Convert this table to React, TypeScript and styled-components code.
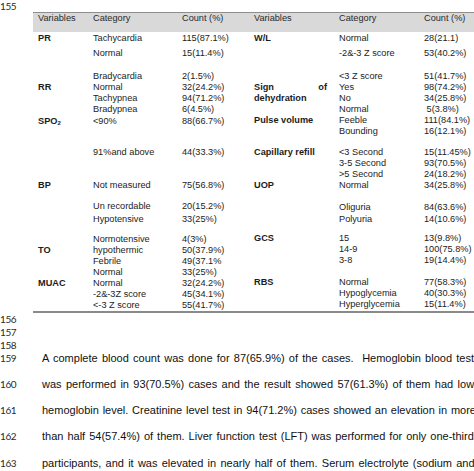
import React from 'react';
import styled, { createGlobalStyle } from 'styled-components';

const GlobalStyle = createGlobalStyle`
  html, body {
    margin: 0;
    padding: 0;
    background: #ffffff;
    overflow: hidden;
  }
`;

const Page = styled.div`
  width: 474px;
  height: 471px;
  overflow: hidden;
  background: #ffffff;
  font-family: 'Liberation Sans', Arial, sans-serif;
  color: #1c1c1c;
`;

const ShortLine = styled.div`
  height: 13px;
  display: flex;
  align-items: center;

  &:first-child {
    height: 12px;
  }
`;

const LineNo = styled.span`
  display: block;
  width: 42px;
  flex-shrink: 0;
  font-family: Lato, 'Open Sans', sans-serif;
  font-size: 10px;
  letter-spacing: -0.4px;
  line-height: 13px;
  color: #2a2a2a;
`;

const Table = styled.div`
  margin-left: 33px;
  width: 480px;
  border-top: 1px solid #8e8e8e;
  font-size: 9.2px;
  line-height: 11px;
`;

const Header = styled.div`
  display: flex;
  height: 19px;
  padding-left: 5px;
  background: #d9d9d9;
  color: #2a2a2a;

  & > div:first-child {
    width: 216px;
  }
`;

const Body = styled.div`
  display: flex;
  padding-left: 5px;
  border-bottom: 2px solid #8a8a8a;
`;

const Half = styled.div`
  display: flex;
  flex-direction: column;

  &:first-child {
    width: 216px;
  }
`;

const Row = styled.div<{ $gap: number; $cols: string }>`
  display: grid;
  grid-template-columns: ${(p) => p.$cols};
  margin-top: ${(p) => p.$gap}px;
  height: 11px;
  white-space: pre;
`;

const Cell = styled.span`
  display: block;
`;

const VarCell = styled.span`
  display: block;
  font-weight: 700;

  sub {
    font-size: 6px;
    line-height: 0;
    vertical-align: -1px;
  }
`;

const Spread = styled.span`
  display: flex;
  justify-content: space-between;
  width: 73px;
`;

const TextLine = styled.div`
  display: flex;
  align-items: flex-start;
  height: 26.3px;
`;

const Text = styled.span<{ $spacing: number }>`
  font-size: 11px;
  line-height: 13px;
  white-space: pre;
  word-spacing: ${(p) => p.$spacing}px;
  color: #111111;
`;

interface TableRow {
  gap?: number;
  variable?: React.ReactNode;
  category: string;
  count: string;
}

const leftRows: TableRow[] = [
  { gap: 1, variable: 'PR', category: 'Tachycardia', count: '115(87.1%)' },
  { gap: 4, category: 'Normal', count: '15(11.4%)' },
  { gap: 12, category: 'Bradycardia', count: '2(1.5%)' },
  { variable: 'RR', category: 'Normal', count: '32(24.2%)' },
  { category: 'Tachypnea', count: '94(71.2%)' },
  { category: 'Bradypnea', count: '6(4.5%)' },
  { gap: 1, variable: <>SPO<sub>2</sub></>, category: '<90%', count: '88(66.7%)' },
  { gap: 20, category: '91%and above', count: '44(33.3%)' },
  { gap: 22, variable: 'BP', category: 'Not measured', count: '75(56.8%)' },
  { gap: 10, category: 'Un recordable', count: '20(15.2%)' },
  { gap: 1.5, category: 'Hypotensive', count: '33(25%)' },
  { gap: 9, category: 'Normotensive', count: '4(3%)' },
  { variable: 'TO', category: 'hypothermic', count: '50(37.9%)' },
  { category: 'Febrile', count: '49(37.1%' },
  { category: 'Normal', count: '33(25%)' },
  { variable: 'MUAC', category: 'Normal', count: '32(24.2%)' },
  { category: '-2&-3Z score', count: '45(34.1%)' },
  { category: '<-3 Z score', count: '55(41.7%)' },
];

const rightRows: TableRow[] = [
  { gap: 1, variable: 'W/L', category: 'Normal', count: '28(21.1)' },
  { gap: 4, category: '-2&-3 Z score', count: '53(40.2%)' },
  { gap: 12, category: '<3 Z score', count: '51(41.7%)' },
  {
    variable: (
      <Spread>
        <span>Sign</span>
        <span>of</span>
      </Spread>
    ),
    category: 'Yes',
    count: '98(74.2%)',
  },
  { variable: 'dehydration', category: 'No', count: '34(25.8%)' },
  { category: 'Normal', count: ' 5(3.8%)' },
  { variable: 'Pulse volume', category: 'Feeble', count: '111(84.1%)' },
  { category: 'Bounding', count: '16(12.1%)' },
  { gap: 10, variable: 'Capillary refill', category: '<3 Second', count: '15(11.45%)' },
  { category: '3-5 Second', count: '93(70.5%)' },
  { category: '>5 Second', count: '24(18.2%)' },
  { variable: 'UOP', category: 'Normal', count: '34(25.8%)' },
  { gap: 11, category: 'Oliguria', count: '84(63.6%)' },
  { gap: 0.5, category: 'Polyuria', count: '14(10.6%)' },
  { gap: 8, variable: 'GCS', category: '15', count: '13(9.8%)' },
  { category: '14-9', count: '100(75.8%)' },
  { category: '3-8', count: '19(14.4%)' },
  { gap: 11, variable: 'RBS', category: 'Normal', count: '77(58.3%)' },
  { category: 'Hypoglycemia', count: '40(30.3%)' },
  { category: 'Hyperglycemia', count: '15(11.4%)' },
];

// word spacing per line stands in for the justified text of the document
const paragraph: { no: number; text: string; spacing: number }[] = [
  { no: 159, text: 'A complete blood count was done for 87(65.9%) of the cases.  Hemoglobin blood test', spacing: 1.2 },
  { no: 160, text: 'was performed in 93(70.5%) cases and the result showed 57(61.3%) of them had lower', spacing: 1.3 },
  { no: 161, text: 'hemoglobin level. Creatinine level test in 94(71.2%) cases showed an elevation in more', spacing: 0.7 },
  { no: 162, text: 'than half 54(57.4%) of them. Liver function test (LFT) was performed for only one-third', spacing: 0.95 },
  { no: 163, text: 'participants, and it was elevated in nearly half of them. Serum electrolyte (sodium and', spacing: 1.2 },
];

const LEFT_COLS = '55px 89px 72px';
const RIGHT_COLS = '85px 85px 80px';

const App: React.FC = () => {
  const renderHalf = (rows: TableRow[], cols: string) => (
    <Half>
      {rows.map((row, i) => (
        <Row key={i} $gap={row.gap ?? 0} $cols={cols}>
          <VarCell>{row.variable}</VarCell>
          <Cell>{row.category}</Cell>
          <Cell>{row.count}</Cell>
        </Row>
      ))}
    </Half>
  );

  return (
    <>
      <GlobalStyle />
      <Page>
        <ShortLine>
          <LineNo>155</LineNo>
        </ShortLine>

        <Table>
          <Header>
            <Row $gap={0} $cols={LEFT_COLS}>
              <Cell>Variables</Cell>
              <Cell>Category</Cell>
              <Cell>Count (%)</Cell>
            </Row>
            <Row $gap={0} $cols={RIGHT_COLS}>
              <Cell>Variables</Cell>
              <Cell>Category</Cell>
              <Cell>Count (%)</Cell>
            </Row>
          </Header>
          <Body>
            {renderHalf(leftRows, LEFT_COLS)}
            {renderHalf(rightRows, RIGHT_COLS)}
          </Body>
        </Table>

        {[156, 157, 158].map((n) => (
          <ShortLine key={n}>
            <LineNo>{n}</LineNo>
          </ShortLine>
        ))}

        {paragraph.map((line) => (
          <TextLine key={line.no}>
            <LineNo>{line.no}</LineNo>
            <Text $spacing={line.spacing}>{line.text}</Text>
          </TextLine>
        ))}
      </Page>
    </>
  );
};

export default App;
